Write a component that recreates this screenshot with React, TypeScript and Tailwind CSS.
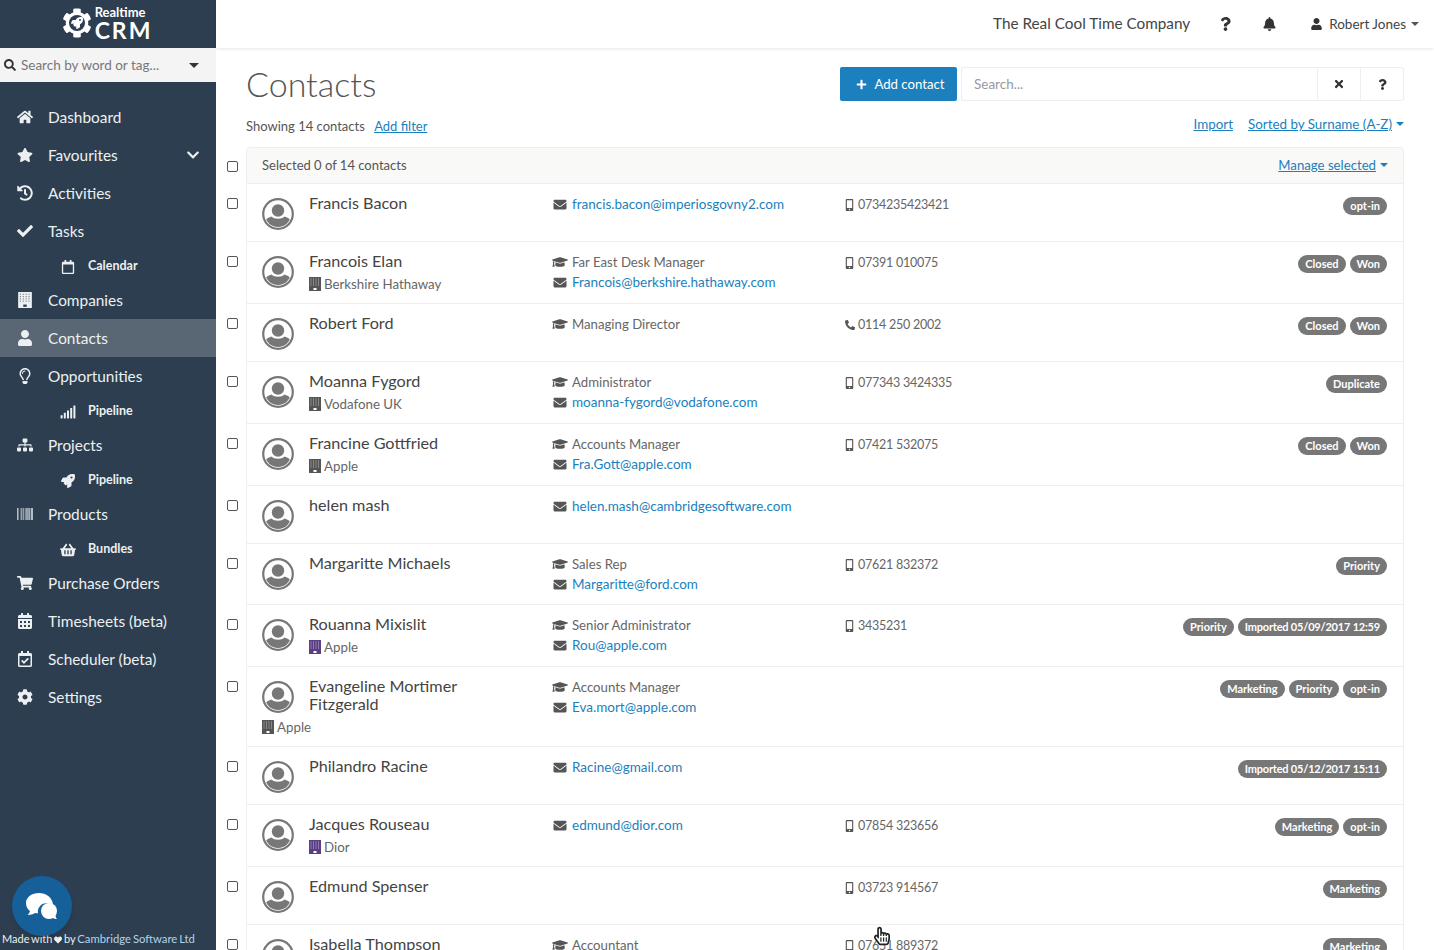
import React from 'react';
import {
  FaHome, FaStar, FaHistory, FaCheck, FaRegCalendar, FaUser, FaRegLightbulb, FaSignal,
  FaSitemap, FaRocket, FaBarcode, FaShoppingBasket, FaShoppingCart, FaCalendarAlt, FaRegCalendarCheck,
  FaCog, FaPlus, FaTimes, FaQuestion, FaBell, FaEnvelope, FaGraduationCap, FaMobileAlt, FaPhoneAlt,
  FaSearch, FaChevronDown, FaHeart, FaRegHandPointer, FaHandPointer,
} from 'react-icons/fa';

// old style building icon, solid block with a grid of tiny windows and a door
const Building = ({ className, windows = '#fff' }: { className?: string; windows?: string }) => (
  <svg viewBox="0 0 12 14" className={className}>
    <rect width="12" height="14" fill="currentColor" />
    <g fill={windows} fillOpacity="0.6">
      {[1.5, 3.5, 5.500, 7.500].map((y) =>
        [2, 4.5, 7, 9.5].map((x) => <rect key={`${x}-${y}`} x={x - 0.5} y={y} width="1" height="1" />),
      )}
    </g>
    <rect x="4.500" y="11" width="3" height="2" fill={windows} />
  </svg>
);

const NavBuilding = ({ className }: { className?: string }) => <Building className={className} windows="#2c3e50" />;

const nav = [
  { label: 'Dashboard', icon: FaHome },
  { label: 'Favourites', icon: FaStar, chevron: true },
  { label: 'Activities', icon: FaHistory },
  { label: 'Tasks', icon: FaCheck },
  { label: 'Calendar', icon: FaRegCalendar, sub: true },
  { label: 'Companies', icon: NavBuilding },
  { label: 'Contacts', icon: FaUser, active: true },
  { label: 'Opportunities', icon: FaRegLightbulb },
  { label: 'Pipeline', icon: FaSignal, sub: true },
  { label: 'Projects', icon: FaSitemap },
  { label: 'Pipeline', icon: FaRocket, sub: true },
  { label: 'Products', icon: FaBarcode },
  { label: 'Bundles', icon: FaShoppingBasket, sub: true },
  { label: 'Purchase Orders', icon: FaShoppingCart },
  { label: 'Timesheets (beta)', icon: FaCalendarAlt },
  { label: 'Scheduler (beta)', icon: FaRegCalendarCheck },
  { label: 'Settings', icon: FaCog },
];

type Contact = {
  name: string;
  company?: string;
  purple?: boolean;
  job?: string;
  email?: string;
  phone?: string;
  landline?: boolean;
  tags?: string[];
};

const contacts: Contact[] = [
  { name: 'Francis Bacon', email: 'francis.bacon@imperiosgovny2.com', phone: '0734235423421', tags: ['opt-in'] },
  { name: 'Francois Elan', company: 'Berkshire Hathaway', job: 'Far East Desk Manager', email: 'Francois@berkshire.hathaway.com', phone: '07391 010075', tags: ['Closed', 'Won'] },
  { name: 'Robert Ford', job: 'Managing Director', phone: '0114 250 2002', landline: true, tags: ['Closed', 'Won'] },
  { name: 'Moanna Fygord', company: 'Vodafone UK', job: 'Administrator', email: 'moanna-fygord@vodafone.com', phone: '077343 3424335', tags: ['Duplicate'] },
  { name: 'Francine Gottfried', company: 'Apple', job: 'Accounts Manager', email: 'Fra.Gott@apple.com', phone: '07421 532075', tags: ['Closed', 'Won'] },
  { name: 'helen mash', email: 'helen.mash@cambridgesoftware.com' },
  { name: 'Margaritte Michaels', job: 'Sales Rep', email: 'Margaritte@ford.com', phone: '07621 832372', tags: ['Priority'] },
  { name: 'Rouanna Mixislit', company: 'Apple', purple: true, job: 'Senior Administrator', email: 'Rou@apple.com', phone: '3435231', tags: ['Priority', 'Imported 05/09/2017 12:59'] },
  { name: 'Evangeline Mortimer Fitzgerald', company: 'Apple', job: 'Accounts Manager', email: 'Eva.mort@apple.com', tags: ['Marketing', 'Priority', 'opt-in'] },
  { name: 'Philandro Racine', email: 'Racine@gmail.com', tags: ['Imported 05/12/2017 15:11'] },
  { name: 'Jacques Rouseau', company: 'Dior', purple: true, email: 'edmund@dior.com', phone: '07854 323656', tags: ['Marketing', 'opt-in'] },
  { name: 'Edmund Spenser', phone: '03723 914567', tags: ['Marketing'] },
  { name: 'Isabella Thompson', job: 'Accountant', phone: '07651 889372', tags: ['Marketing'] },
];

const Caret = ({ color = 'border-t-[#555]' }: { color?: string }) => (
  <span className={`inline-block w-0 h-0 border-x-4 border-x-transparent border-t-4 ${color}`} />
);

const Avatar = () => (
  <svg viewBox="0 0 32 32" className="float-left w-8 h-8 mt-1 mr-[15px] mb-[2px]">
    <defs>
      <clipPath id="avatar-clip">
        <circle cx="16" cy="16" r="13" />
      </clipPath>
    </defs>
    <circle cx="16" cy="16" r="14.8" fill="none" stroke="#777" strokeWidth="2.2" />
    <g clipPath="url(#avatar-clip)" fill="#777">
      <circle cx="16" cy="12.500" r="6.200" />
      <path d="M3 32v-8c0-2.500 3-4.500 6.500-5.500 1.500 1.500 3.800 2.200 6.500 2.200s5-.7 6.500-2.200c3.500 1 6.500 3 6.500 5.500v8z" />
    </g>
  </svg>
);

const Check = () => (
  <div className="w-[19px] shrink-0">
    <input type="checkbox" className="appearance-none block w-[11px] h-[11px] mt-[14px] border border-[#555] rounded-[2px] bg-white" />
  </div>
);

const ContactRow = ({ c }: { c: Contact }) => (
  <div className="flex">
    <Check />
    <div className="flex flex-1 border-x border-b border-[#eee] pl-[15px] pr-4">
      <div className="w-[275px] mr-[15px] shrink-0 pt-[10px] pb-[9px] flow-root">
        <Avatar />
        <div className="text-[16.2px] leading-[18px] text-[#444] pr-[30px]">{c.name}</div>
        {c.company && (
          <div className="mt-1 text-[13.3px] leading-5 text-[#666] flex items-center gap-[3px]">
            <Building className={`w-3 h-[14px] ${c.purple ? 'text-[#5b3f86]' : 'text-[#555]'}`} />
            {c.company}
          </div>
        )}
      </div>
      <div className="w-[293px] shrink-0 pt-[10px] pb-[10px] text-[13.5px] leading-5 text-[#666]">
        {c.job && (
          <div className="flex items-center text-[13.2px]">
            <FaGraduationCap className="w-4 h-4 mr-1 text-[#555]" />
            {c.job}
          </div>
        )}
        {c.email && (
          <div className="flex items-center">
            <FaEnvelope className="w-[14px] h-[13px] ml-px mr-[5px] text-[#555]" />
            <a className="text-[#1b7fbd]">{c.email}</a>
          </div>
        )}
      </div>
      <div className="w-[140px] shrink-0 pt-[11px] text-[12.5px] tracking-[-0.25px] leading-5 text-[#666]">
        {c.phone && (
          <div className="flex items-center">
            {c.landline
              ? <FaPhoneAlt className="w-[10px] h-[10px] mr-[3px] text-[#555]" />
              : <FaMobileAlt className="w-[9px] h-3 mr-1 text-[#555]" />}
            {c.phone}
          </div>
        )}
      </div>
      <div className="flex-1 flex justify-end items-start gap-1 pt-[13px]">
        {c.tags?.map((t) => (
          <span key={t} className={`h-[18px] px-[7px] rounded-full bg-[#777] text-white text-[11px] font-bold leading-[18px] whitespace-nowrap ${t.startsWith('Imported') ? 'tracking-[-0.2px]' : ''}`}>{t}</span>
        ))}
      </div>
    </div>
  </div>
);

export default function App() {
  return (
    <div className="flex h-screen overflow-hidden bg-white font-['Lato','Noto_Sans',sans-serif] text-[#555]">
      <aside className="w-[216px] shrink-0 flex flex-col bg-[#2c3e50] text-[#ecf0f1] relative">
        <div className="h-12 flex items-center justify-center gap-[3px] pr-[2px] pb-[3px] text-white">
          <div className="relative w-[30px] h-[30px]">
            <FaCog className="w-[30px] h-[30px]" />
            <span className="absolute left-[7px] top-[7px] w-4 h-4 rounded-full bg-[#2c3e50] flex items-center justify-center">
              <FaRocket className="w-3 h-3 text-white" />
            </span>
          </div>
          <div className="font-bold">
            <div className="text-[13px] leading-[14px]">Realtime</div>
            <div className="text-[23px] leading-[20px] tracking-[2px] mt-px">CRM</div>
          </div>
        </div>
        <div className="h-[34px] flex items-center bg-[#f4f4f5] pl-1 pr-[17px]">
          <FaSearch className="w-3 h-3 mr-[5px] text-[#333]" />
          <span className="flex-1 text-[13.5px] text-[#777]">Search by word or tag...</span>
          <span className="w-0 h-0 border-x-[5px] border-x-transparent border-t-[5px] border-t-[#333]" />
        </div>
        <nav className="pt-4">
          {nav.map((n, i) => {
            const Icon = n.icon;
            if (n.sub) {
              return (
                <div key={i} className="h-[31px] flex items-center pl-[60px] pt-[2px] text-[12.5px] font-bold">
                  <span className="w-[28px]"><Icon className="w-4 h-[14px]" /></span>
                  {n.label}
                </div>
              );
            }
            return (
              <div key={i} className={`h-[38px] flex items-center pl-[17px] pr-[16px] text-[15.4px] ${n.active ? 'bg-[#596673]' : ''}`}>
                <span className="w-[31px]"><Icon className="w-4 h-4" /></span>
                <span className="flex-1 pt-[2px]">{n.label}</span>
                {n.chevron && <FaChevronDown className="w-[14px] h-[14px]" />}
              </div>
            );
          })}
        </nav>
        <div className="mt-auto pl-[2px] pb-1 text-[11px] leading-[15px] whitespace-nowrap [word-spacing:-1px]">
          Made with <FaHeart className="inline w-2 h-2" /> by <span className="text-[#b5d3ea] text-[11.3px]">Cambridge Software Ltd</span>
        </div>
        <div className="absolute left-3 top-[876px] w-[60px] h-[60px] rounded-full bg-[#16609a] shadow-md flex items-center justify-center">
          <svg viewBox="0 0 34 30" className="w-[34px] h-[30px]" fill="#fff">
            <path d="M14 2C7 2 1 6 1 12c0 4 2 6.500 4 8-.5 2-1.500 3-2.500 4 3 0 6-1 7.500-2 1 .2 2 .3 3 .3-1-5 3-10 8-10 3 0 5 0 7 1C27 6 21 2 14 2z" />
            <circle cx="24" cy="20" r="8" />
            <path d="M27 26c1 1.500 3 2 5 2-1-1-1.500-2.500-1.500-4z" />
          </svg>
        </div>
      </aside>

      <div className="flex-1 min-w-0 flex flex-col">
        <header className="h-12 shrink-0 flex items-center justify-end bg-white shadow-[0_1px_3px_rgba(0,0,0,0.1)] pr-[15px] relative">
          <span className="text-[15.3px] text-[#444] mr-[29px] pb-[2px]">The Real Cool Time Company</span>
          <FaQuestion className="w-[13px] h-[14px] text-[#333] mr-[31px]" />
          <FaBell className="w-[13px] h-[14px] text-[#333] mr-[35px]" />
          <FaUser className="w-[11px] h-3 text-[#333] mr-[7px]" />
          <span className="text-[13.5px] text-[#444] mr-[5px]">Robert Jones</span>
          <Caret />
        </header>

        <main className="flex-1 min-h-0 pl-[11px] pr-[30px]">
          <div className="flex items-center justify-between pl-[19px] pt-[19px] h-[53px]">
            <h1 className="text-[34px] font-light text-[#555] leading-[34px]">Contacts</h1>
            <div className="flex items-center h-[34px]">
              <button className="h-[34px] w-[117px] rounded-[2px] bg-[#1b80bd] text-white text-[13.2px] flex items-center justify-center gap-[7px] pl-1">
                <FaPlus className="w-[11px] h-[11px]" /><span className="pt-[2px]">Add contact</span>
              </button>
              <div className="ml-1 flex h-[34px] w-[443px] border border-[#eee] rounded-[2px]">
                <input placeholder="Search..." className="flex-1 min-w-0 pl-[12px] text-[13.5px] outline-none placeholder:text-[#999]" />
                <span className="w-[43px] flex items-center justify-center border-l border-[#eee]"><FaTimes className="w-3 h-3 text-[#333]" /></span>
                <span className="w-[43px] flex items-center justify-center border-l border-[#eee]"><FaQuestion className="w-[9px] h-[11px] text-[#333]" /></span>
              </div>
            </div>
          </div>

          <div className="flex items-center justify-between pl-[19px] h-[46px] pb-[1px] pt-[2px] text-[13.4px]">
            <div className="text-[#555] text-[13px] pt-[5px]">Showing 14 contacts <a className="ml-[6px] text-[#1b7fbd] underline">Add filter</a></div>
            <div className="flex items-center text-[#1b7fbd]">
              <a className="underline mr-[15px]">Import</a>
              <a className="underline mr-1">Sorted by Surname (A-Z)</a>
              <Caret color="border-t-[#1b7fbd]" />
            </div>
          </div>

          <div className="flex">
            <Check />
            <div className="flex-1 h-[37px] flex items-center justify-between border border-[#eee] rounded-t-[4px] bg-[#f9f9f7] pl-[15px] pr-[15px] text-[13px]">
              <span className="text-[#555]">Selected 0 of 14 contacts</span>
              <span className="flex items-center text-[#1b7fbd] text-[13.2px]">
                <a className="underline mr-1">Manage selected</a>
                <Caret color="border-t-[#1b7fbd]" />
              </span>
            </div>
          </div>
          {contacts.map((c) => <ContactRow key={c.name} c={c} />)}
        </main>
      </div>

      <div className="absolute left-[874px] top-[924px] w-4 h-6">
        <FaHandPointer className="absolute inset-0 w-4 h-6 text-white" />
        <FaRegHandPointer className="absolute inset-0 w-4 h-6 text-[#222]" />
      </div>
    </div>
  );
}
